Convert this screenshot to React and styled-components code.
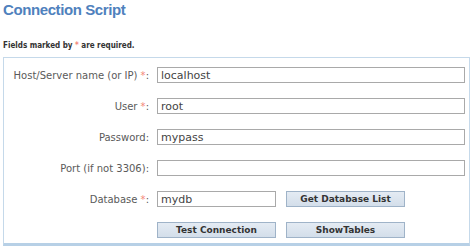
import React from "react";
import styled, { createGlobalStyle } from "styled-components";

const GlobalStyle = createGlobalStyle`
    body {
        margin: 0;
        background: #ffffff;
        font-family: "DejaVu Sans", Verdana, sans-serif;
    }
`;

const Page = styled.div`
    width: 474px;
    height: 246px;
    padding: 0 4px 0 3px;
    box-sizing: border-box;
    overflow: hidden;
`;

const Title = styled.h1`
    margin: 0;
    padding: 1px 0 0 0;
    height: 24px;
    font-family: "Liberation Sans", Arial, sans-serif;
    font-size: 15px;
    letter-spacing: -0.4px;
    font-weight: bold;
    color: #4f81bd;
`;

const Note = styled.p`
    margin: 16px 0 0 0;
    height: 16px;
    font-size: 8px;
    font-stretch: condensed;
    font-weight: bold;
    color: #333;
`;

const Star = styled.span`
    color: #f4877a;
`;

const Panel = styled.div`
    border: 1px solid #c5d9ea;
    border-bottom: 3px solid #b7d0e6;
    padding: 9px 4px 5px 0;
    display: grid;
    grid-template-columns: 145px 1fr;
    column-gap: 8px;
    row-gap: 15px;
    align-items: center;
`;

const Label = styled.label`
    text-align: right;
    font-size: 10px;
    color: #5a5a5a;
    white-space: nowrap;
`;

const Field = styled.div`
    display: flex;
    gap: 10px;
    align-items: center;
`;

const Input = styled.input`
    box-sizing: border-box;
    height: 16px;
    width: ${(p) => (p.$short ? "119px" : "100%")};
    border: 1px solid #a9a9a9;
    padding: 0 3px;
    font-family: "DejaVu Sans", Verdana, sans-serif;
    font-size: 11px;
    color: #444;
    background: #fff;
    outline: none;
`;

const Button = styled.button`
    box-sizing: border-box;
    width: 119px;
    height: 16px;
    padding: 0;
    border: 1px solid #9fb3c8;
    background: linear-gradient(#e4ebf3, #d3deea);
    font-family: "DejaVu Sans", Verdana, sans-serif;
    font-size: 9px;
    font-weight: bold;
    color: #333;
`;

const rows = [
    { label: "Host/Server name (or IP)", req: true, value: "localhost" },
    { label: "User", req: true, value: "root" },
    { label: "Password", req: false, value: "mypass" },
    { label: "Port (if not 3306)", req: false, value: "" },
];

export default function App() {
    return (
        <Page>
            <GlobalStyle />
            <Title>Connection Script</Title>
            <Note>
                Fields marked by <Star>*</Star> are required.
            </Note>
            <Panel>
                {rows.map((r) => (
                    <React.Fragment key={r.label}>
                        <Label>
                            {r.label}
                            {r.req && <Star> *</Star>}:
                        </Label>
                        <Input defaultValue={r.value} />
                    </React.Fragment>
                ))}
                <Label>
                    Database<Star> *</Star>:
                </Label>
                <Field>
                    <Input $short defaultValue="mydb" />
                    <Button>Get Database List</Button>
                </Field>
                <span />
                <Field>
                    <Button>Test Connection</Button>
                    <Button>ShowTables</Button>
                </Field>
            </Panel>
        </Page>
    );
}
